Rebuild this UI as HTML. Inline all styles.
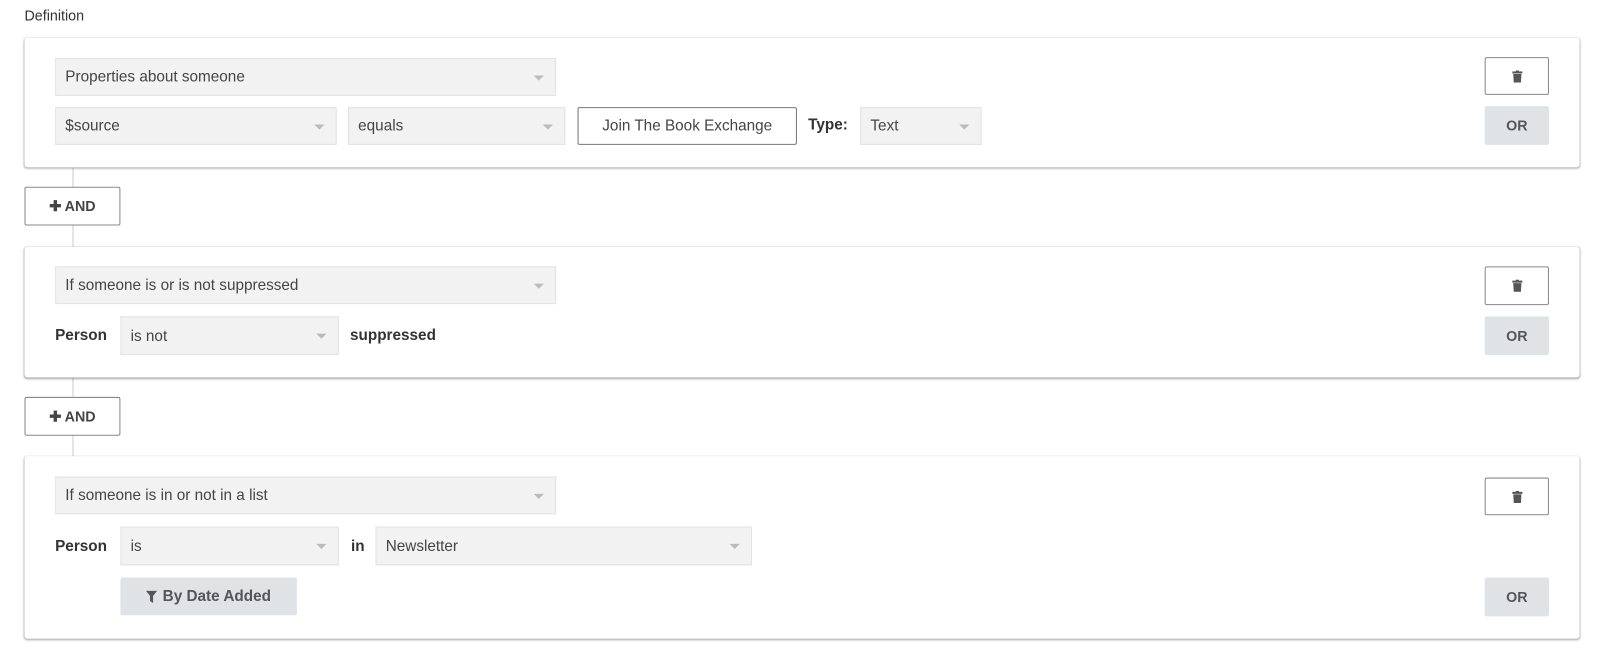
<!DOCTYPE html>
<html><head><style>
*{box-sizing:border-box;margin:0;padding:0}
body{width:1600px;height:650px;background:#fff;font-family:"Liberation Sans",sans-serif;color:#333;position:relative;overflow:hidden}
#w{position:absolute;left:0;top:0;width:1568px;height:637px;transform:scale(1.0204);transform-origin:0 0}
.a{position:absolute}
.card{position:absolute;left:24px;width:1524px;background:#fff;border-radius:3px;box-shadow:0 1px 2px rgba(0,0,0,.35),0 0 1px rgba(0,0,0,.1)}
.sel{position:absolute;background:#f2f2f2;border:1px solid #e2e2e2;font-size:15px;color:#444;padding-left:9px;display:flex;align-items:center}
.sel:after{content:"";position:absolute;right:11px;top:50%;margin-top:-2px;border-left:5px solid transparent;border-right:5px solid transparent;border-top:5px solid #bbb}
.btn{position:absolute;border:1px solid #888;border-radius:2px;background:#fff;display:flex;align-items:center;justify-content:center}
.or{position:absolute;background:#dfe3e6;color:#555;font-weight:bold;font-size:14px;display:flex;align-items:center;justify-content:center;border-radius:2px}
.lbl{position:absolute;font-weight:bold;font-size:15px;color:#333}
.line{position:absolute;left:71px;width:1px;background:#ccc}
</style></head><body><div id="w">
<div class="a" style="left:24px;top:7px;font-size:14px;color:#333">Definition</div>

<div class="line" style="top:164px;height:78px"></div>
<div class="line" style="top:370px;height:78px"></div>

<div class="card" style="top:37px;height:127px"></div>
<div class="sel" style="left:54px;top:57px;width:491px;height:37px">Properties about someone</div>
<div class="sel" style="left:54px;top:105px;width:276px;height:37px">$source</div>
<div class="sel" style="left:341px;top:105px;width:213px;height:37px">equals</div>
<div class="a" style="left:566px;top:105px;width:215px;height:37px;border:1px solid #777;border-radius:2px;font-size:15px;color:#444;display:flex;align-items:center;justify-content:center">Join The Book Exchange</div>
<div class="lbl" style="left:792px;top:114px">Type:</div>
<div class="sel" style="left:843px;top:105px;width:119px;height:37px">Text</div>

<div class="card" style="top:242px;height:128px"></div>
<div class="sel" style="left:54px;top:261px;width:491px;height:37px">If someone is or is not suppressed</div>
<div class="lbl" style="left:54px;top:320px">Person</div>
<div class="sel" style="left:118px;top:310px;width:214px;height:38px">is not</div>
<div class="lbl" style="left:343px;top:320px">suppressed</div>

<div class="card" style="top:447px;height:179px"></div>
<div class="sel" style="left:54px;top:467px;width:491px;height:37px">If someone is in or not in a list</div>
<div class="lbl" style="left:54px;top:527px">Person</div>
<div class="sel" style="left:118px;top:516px;width:214px;height:38px">is</div>
<div class="lbl" style="left:344px;top:527px">in</div>
<div class="sel" style="left:368px;top:516px;width:369px;height:38px">Newsletter</div>
<div class="or" style="left:118px;top:566px;width:173px;height:37px;font-size:15px;color:#555"><svg width="11" height="12" viewBox="0 0 11 12" style="margin-right:5px"><path d="M0 0H11L7 5V12L4 10V5Z" fill="#555"/></svg>By Date Added</div>

<div class="btn" style="left:24px;top:183px;width:94px;height:38px;font-weight:bold;font-size:14px;color:#444">✚ AND</div>
<div class="btn" style="left:24px;top:389px;width:94px;height:38px;font-weight:bold;font-size:14px;color:#444">✚ AND</div>

<div class="btn" style="left:1455px;top:56px;width:63px;height:37px"><svg width="10" height="12" viewBox="0 0 10 12"><rect x="0" y="1" width="10" height="2" fill="#555"/><rect x="3.5" y="0" width="3" height="1.5" fill="#555"/><path d="M1 3.5H9L8.5 12H1.5Z" fill="#555"/></svg></div>
<div class="or" style="left:1455px;top:104px;width:63px;height:38px">OR</div>
<div class="btn" style="left:1455px;top:261px;width:63px;height:38px"><svg width="10" height="12" viewBox="0 0 10 12"><rect x="0" y="1" width="10" height="2" fill="#555"/><rect x="3.5" y="0" width="3" height="1.5" fill="#555"/><path d="M1 3.5H9L8.5 12H1.5Z" fill="#555"/></svg></div>
<div class="or" style="left:1455px;top:310px;width:63px;height:38px">OR</div>
<div class="btn" style="left:1455px;top:468px;width:63px;height:37px"><svg width="10" height="12" viewBox="0 0 10 12"><rect x="0" y="1" width="10" height="2" fill="#555"/><rect x="3.5" y="0" width="3" height="1.5" fill="#555"/><path d="M1 3.5H9L8.5 12H1.5Z" fill="#555"/></svg></div>
<div class="or" style="left:1455px;top:566px;width:63px;height:38px">OR</div>
</div></body></html>
